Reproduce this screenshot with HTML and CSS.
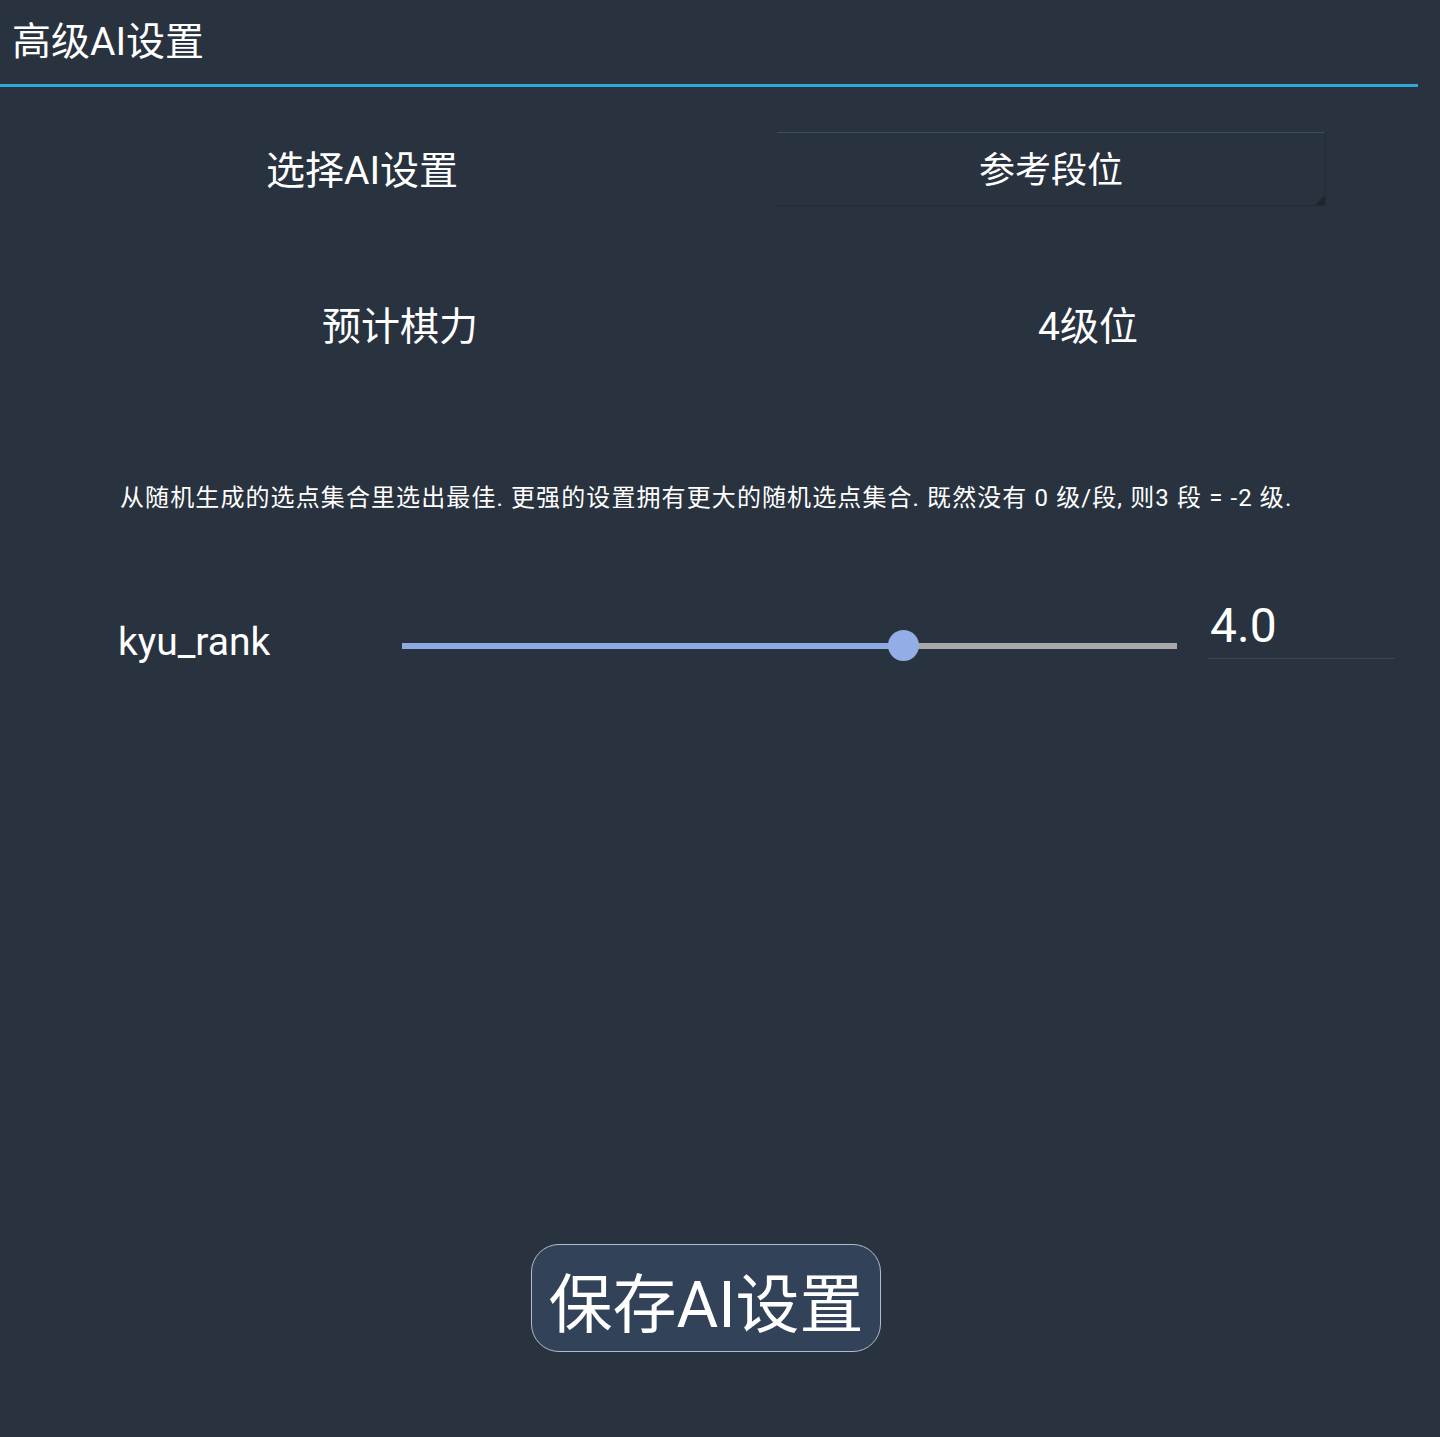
FILE: index.html
```html
<!DOCTYPE html>
<html lang="zh-CN">
<head>
<meta charset="utf-8">
<title>高级AI设置</title>
<link rel="stylesheet" href="styles.css">
</head>
<body>
<div class="page">
  <header class="header">
    <h1 class="title">高级AI设置</h1>
  </header>
  <div class="rule"></div>

  <div class="row row-select">
    <div class="cell">选择AI设置</div>
    <div class="cell cell-right">
      <div class="spinner">参考段位</div>
    </div>
  </div>

  <div class="row row-estimate">
    <div class="cell">预计棋力</div>
    <div class="cell">4级位</div>
  </div>

  <p class="desc">从随机生成的选点集合里选出最佳. 更强的设置拥有更大的随机选点集合. 既然没有 0 级/段, 则3 段 = -2 级.</p>

  <div class="slider-row">
    <div class="slider-label">kyu_rank</div>
    <div class="slider">
      <div class="track">
        <div class="fill" style="width: 64.6%"></div>
        <div class="thumb" style="left: 64.6%"></div>
      </div>
    </div>
    <div class="value">4.0</div>
  </div>

  <div class="footer">
    <button class="save">保存AI设置</button>
  </div>
</div>
</body>
</html>
```

FILE: styles.css
```css
html, body {
  margin: 0;
  padding: 0;
  background: #29323f;
}

body {
  font-family: "Roboto", "Noto Sans CJK SC", sans-serif;
  color: #ffffff;
}

.page {
  min-height: 1437px;
  display: flex;
  flex-direction: column;
}

.header {
  height: 84px;
  display: flex;
  align-items: center;
  padding-left: 12px;
}

.title {
  margin: 0;
  font-size: 39px;
  font-weight: 400;
  line-height: 84px;
}

.rule {
  width: 1418px;
  height: 3px;
  background: #2fa6d9;
}

.row {
  display: grid;
  font-size: 39px;
  text-align: center;
}

.row-select {
  margin-top: 45px;
  grid-template-columns: 724px 1fr;
  height: 73px;
  line-height: 79px;
}

.cell-right {
  padding: 0 115px 0 53px;
}

.spinner {
  position: relative;
  height: 72px;
  font-size: 36px;
  line-height: 76px;
  background: #29323f;
  border-top: 1px solid #3c4d62;
  box-shadow: 0 1px 0 #222a34, 1px 0 0 #242c36;
}

.spinner::after {
  content: "";
  position: absolute;
  right: 0;
  bottom: 0;
  width: 0;
  height: 0;
  border-style: solid;
  border-width: 0 0 10px 10px;
  border-color: transparent transparent #1f262f transparent;
}

.row-estimate {
  margin-top: 84px;
  grid-template-columns: 724px 1fr;
  padding: 0 26px 0 38px;
  height: 73px;
  line-height: 77px;
}

.desc {
  margin: 119px 0 0 120px;
  font-size: 24px;
  line-height: 34px;
  letter-spacing: 1.1px;
}

.slider-row {
  margin-top: 92px;
  height: 70px;
  display: flex;
  align-items: center;
  padding-left: 118px;
}

.slider-label {
  width: 284px;
  font-size: 39px;
  line-height: 70px;
}

.slider {
  width: 775px;
  margin-right: 31px;
  padding-top: 8px;
}

.track {
  position: relative;
  height: 6px;
  background: #a9a9a9;
}

.fill {
  height: 100%;
  background: #8fa9e2;
}

.thumb {
  position: absolute;
  top: 50%;
  width: 31px;
  height: 31px;
  margin: -16px 0 0 -15px;
  border-radius: 50%;
  background: #93aee6;
}

.value {
  align-self: flex-start;
  margin-top: -6px;
  width: 185px;
  padding-left: 2px;
  font-size: 48px;
  line-height: 50px;
  padding-bottom: 7px;
  border-bottom: 1px solid #3b4552;
}

.footer {
  margin-top: auto;
  padding-bottom: 85px;
  display: flex;
  justify-content: center;
  padding-right: 28px;
}

.save {
  width: 350px;
  height: 108px;
  border-radius: 28px;
  border: 1px solid #b4bcc8;
  background: #324259;
  color: #ffffff;
  font-family: "Roboto", "Noto Sans CJK SC", sans-serif;
  font-size: 64px;
  line-height: 106px;
  padding: 8px 0 0 0;
}
```
